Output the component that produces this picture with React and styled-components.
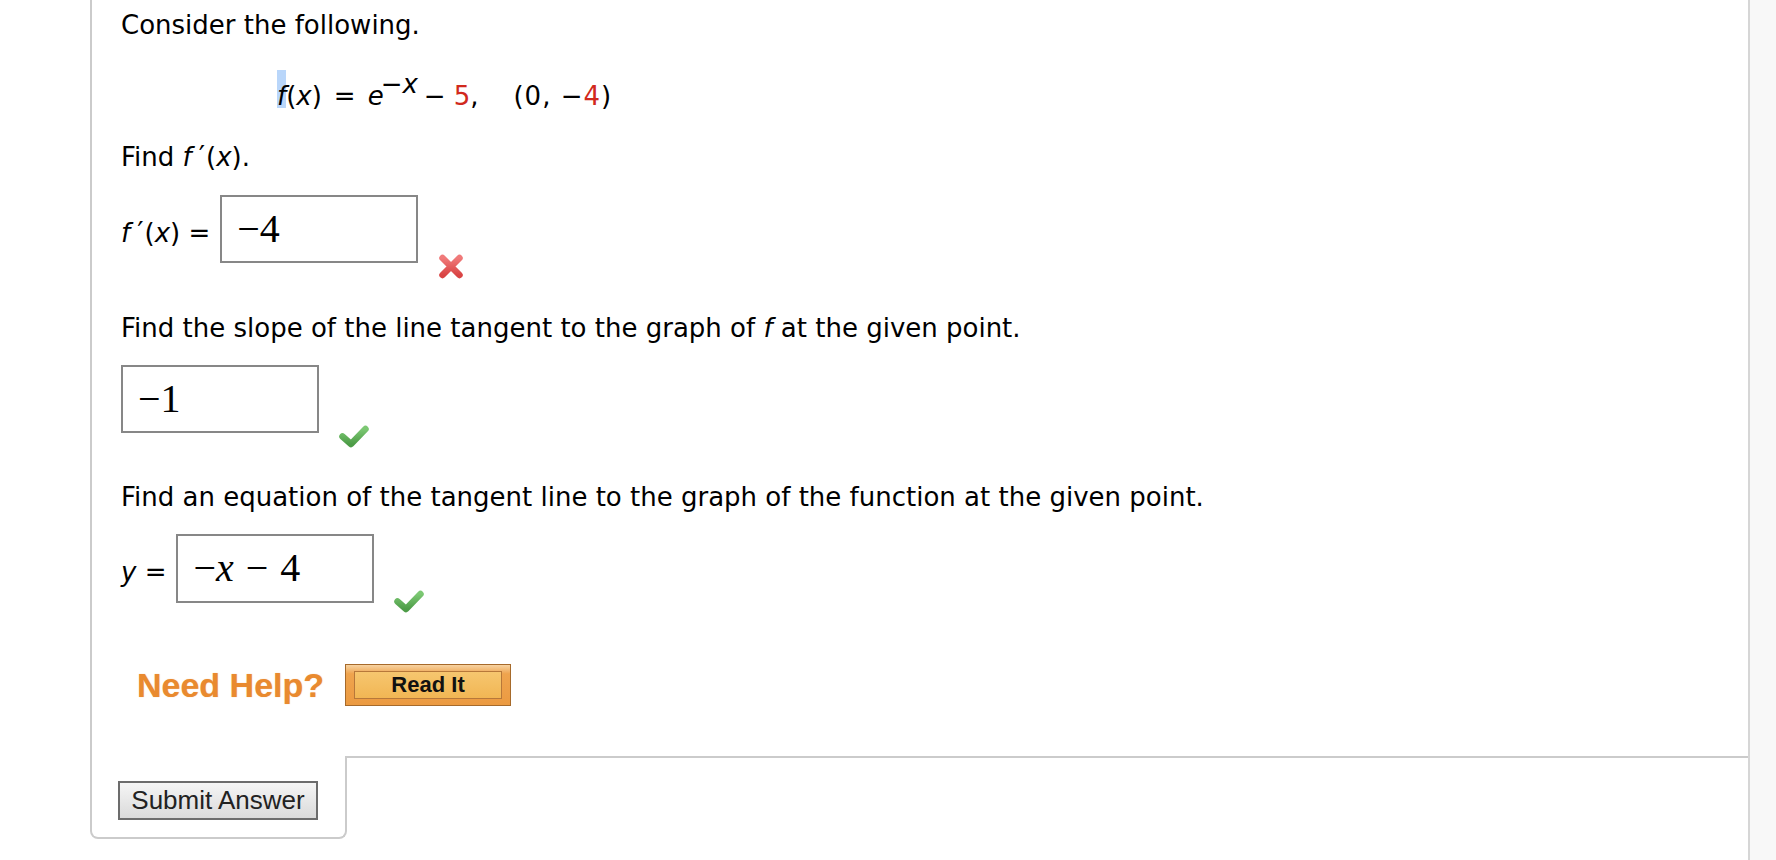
import React from 'react';
import styled, { createGlobalStyle } from 'styled-components';

const Global = createGlobalStyle`
  html, body { margin: 0; padding: 0; }
  body {
    background: #ffffff;
    color: #000;
    font-family: "DejaVu Sans", Verdana, sans-serif;
  }
`;

const Page = styled.div`
  display: flex;
  min-height: 860px;
`;

const Main = styled.main`
  flex: 1;
  padding-left: 90px;
  background: #ffffff;
  display: flex;
  flex-direction: column;
`;

const Sidebar = styled.aside`
  flex: none;
  width: 26px;
  background: #f8f8f8;
  border-left: 2px solid #d6d6d6;
`;

const Body = styled.section`
  border-left: 2px solid #cbcbcb;
  padding: 10px 0 50px 29px;
`;

const Para = styled.p`
  margin: ${(p) => p.$gap || 0}px 0 0 0;
  font-size: 26px;
  line-height: 30px;
`;

const I = styled.i`
  font-style: italic;
`;

const Prime = styled.span`
  margin: 0 1px 0 7px;
  font-size: 28px;
`;

const Red = styled.span`
  color: #d1291d;
`;

const Equation = styled.div`
  margin: ${(p) => p.$gap}px 0 0 156px;
  font-size: 26px;
  line-height: 30px;
  white-space: nowrap;
`;

const Highlight = styled.span`
  padding-top: 11px;
  background: linear-gradient(#b9d6fa, #b9d6fa) no-repeat;
  background-size: 100% 38px;
`;

const Op = styled.span`
  margin: 0 ${(p) => p.$r}px 0 ${(p) => p.$l}px;
`;

const Sup = styled.span`
  vertical-align: 12px;
  line-height: 0;
  margin-left: -3px;
`;

const Point = styled.span`
  margin-left: 35px;
  letter-spacing: 1px;
`;

const AnswerRow = styled.div`
  display: flex;
  align-items: flex-start;
  height: 68px;
  margin-top: ${(p) => p.$gap}px;
`;

const Label = styled.span`
  font-size: 26px;
  line-height: 30px;
  margin: 23px 10px 0 0;
  white-space: nowrap;
`;

const AnswerBox = styled.div`
  box-sizing: border-box;
  width: 198px;
  height: ${(p) => p.$h || 68}px;
  border: 2px solid #878787;
  background: #fff;
  padding-left: 15px;
  font-family: "Liberation Serif", "Times New Roman", serif;
  font-size: 40px;
  line-height: 64px;
  white-space: nowrap;
`;

const MathOp = styled.span`
  margin: 0 ${(p) => p.$m}px;
`;

const Mark = styled.svg`
  flex: none;
  margin: ${(p) => p.$top}px 0 0 20px;
`;

const HelpRow = styled.div`
  display: flex;
  align-items: center;
  gap: 21px;
  margin: 62px 0 0 16px;
`;

const HelpText = styled.span`
  font-family: "Liberation Sans", Arial, sans-serif;
  font-weight: bold;
  font-size: 34px;
  line-height: 42px;
  color: #e98a2f;
  text-shadow: 0 0 1px rgba(233, 138, 47, 0.6);
`;

const ReadIt = styled.button`
  box-sizing: border-box;
  width: 166px;
  height: 42px;
  padding: 6px 8px;
  border: 1px solid #a66a2b;
  background: linear-gradient(#f7d3a2 0%, #efa44e 22%, #eb9a41 100%);
  cursor: pointer;
  display: flex;
`;

const ReadItFace = styled.span`
  flex: 1;
  display: flex;
  align-items: center;
  justify-content: center;
  border: 1px solid #b7783a;
  background: linear-gradient(#f6c66f, #f1b654);
  font-family: "Liberation Sans", Arial, sans-serif;
  font-weight: bold;
  font-size: 22px;
  color: #111;
`;

const Footer = styled.div`
  display: flex;
  align-items: flex-start;
`;

const Tab = styled.div`
  box-sizing: border-box;
  width: 257px;
  flex: none;
  border: 2px solid #cbcbcb;
  border-top: none;
  border-radius: 0 0 8px 8px;
  padding: 25px 0 17px 26px;
`;

const Filler = styled.div`
  flex: 1;
  border-top: 2px solid #cbcbcb;
`;

const SubmitButton = styled.button`
  box-sizing: border-box;
  width: 200px;
  height: 39px;
  padding: 0;
  border: 2px solid #6c6c6c;
  background: linear-gradient(#f5f5f5, #dadada);
  font-family: "Liberation Sans", Arial, sans-serif;
  font-size: 26px;
  color: #222;
  cursor: pointer;
`;

const WrongIcon = () => (
  <Mark $top={59} width="26" height="25" viewBox="0 0 26 25">
    <defs>
      <linearGradient id="xg" x1="0" y1="0" x2="0" y2="1">
        <stop offset="0" stopColor="#f07a7a" />
        <stop offset="1" stopColor="#d94444" />
      </linearGradient>
    </defs>
    <path d="M4.5 4 L21.5 21 M21.5 4 L4.5 21" stroke="url(#xg)" strokeWidth="6.5" strokeLinecap="round" fill="none" />
  </Mark>
);

const RightIcon = ({ top }) => (
  <Mark $top={top} width="30" height="24" viewBox="0 0 30 24">
    <defs>
      <linearGradient id="cg" x1="0" y1="0" x2="0" y2="1">
        <stop offset="0" stopColor="#7cc873" />
        <stop offset="1" stopColor="#4d9c47" />
      </linearGradient>
    </defs>
    <path d="M3.5 12.5 L12 20 L26.5 5" stroke="url(#cg)" strokeWidth="6.5" strokeLinecap="round" strokeLinejoin="round" fill="none" />
  </Mark>
);

export default function App() {
  return (
    <>
      <Global />
      <Page>
        <Main>
          <Body>
            <Para>Consider the following.</Para>
            <Equation $gap={41}>
              <Highlight><I>f</I></Highlight>(<I>x</I>)<Op $l={12} $r={12}>=</Op><I>e</I>
              <Sup>−<I>x</I></Sup>
              <Op $l={6} $r={8}>−</Op>
              <Red>5</Red>,
              <Point>(0, −<Red>4</Red>)</Point>
            </Equation>
            <Para $gap={31}>
              Find <I>f</I><Prime>′</Prime>(<I>x</I>).
            </Para>
            <AnswerRow $gap={23}>
              <Label>
                <I>f</I><Prime>′</Prime>(<I>x</I>) =
              </Label>
              <AnswerBox>−4</AnswerBox>
              <WrongIcon />
            </AnswerRow>
            <Para $gap={50}>
              Find the slope of the line tangent to the graph of <I>f</I> at the given point.
            </Para>
            <AnswerRow $gap={22}>
              <AnswerBox>−1</AnswerBox>
              <RightIcon top={59} />
            </AnswerRow>
            <Para $gap={49}>
              Find an equation of the tangent line to the graph of the function at the given point.
            </Para>
            <AnswerRow $gap={22}>
              <Label>
                <I>y</I> =
              </Label>
              <AnswerBox $h={69}>
                −<I>x</I><MathOp $m={12}>−</MathOp>4
              </AnswerBox>
              <RightIcon top={55} />
            </AnswerRow>
            <HelpRow>
              <HelpText>Need Help?</HelpText>
              <ReadIt type="button">
                <ReadItFace>Read It</ReadItFace>
              </ReadIt>
            </HelpRow>
          </Body>
          <Footer>
            <Tab>
              <SubmitButton type="button">Submit Answer</SubmitButton>
            </Tab>
            <Filler />
          </Footer>
        </Main>
        <Sidebar />
      </Page>
    </>
  );
}
